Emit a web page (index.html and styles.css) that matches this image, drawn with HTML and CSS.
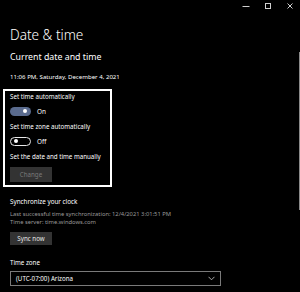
FILE: index.html
```html
<!DOCTYPE html>
<html>
<head>
<meta charset="utf-8">
<link rel="stylesheet" href="styles.css">
</head>
<body>
<div class="window">
  <div class="titlebar">
    <span class="ctl ctl-min"><svg width="8" height="8" viewBox="0 0 8 8"><path d="M0.5 4.5h7" stroke="#cfcfcf" stroke-width="1"/></svg></span>
    <span class="ctl ctl-max"><svg width="8" height="8" viewBox="0 0 8 8"><rect x="1.5" y="1.5" width="5" height="5" fill="none" stroke="#cfcfcf" stroke-width="1"/></svg></span>
    <span class="ctl ctl-close"><svg width="8" height="8" viewBox="0 0 8 8"><path d="M1.5 1.5l5 5M6.5 1.5l-5 5" stroke="#cfcfcf" stroke-width="1"/></svg></span>
  </div>
  <div class="scrollbar"></div>
  <div class="content">
    <h1 class="title">Date &amp; time</h1>
    <h2 class="subtitle">Current date and time</h2>
    <div class="now">11:06 PM, Saturday, December 4, 2021</div>

    <div class="highlight">
      <div class="label">Set time automatically</div>
      <div class="toggle-row">
        <span class="toggle toggle-on"><span class="thumb"></span></span>
        <span class="toggle-text">On</span>
      </div>
      <div class="label">Set time zone automatically</div>
      <div class="toggle-row">
        <span class="toggle toggle-off"><span class="thumb"></span></span>
        <span class="toggle-text">Off</span>
      </div>
      <div class="label label-manual">Set the date and time manually</div>
      <div class="btn btn-disabled">Change</div>
    </div>

    <h3 class="section">Synchronize your clock</h3>
    <div class="info">Last successful time synchronization: 12/4/2021 3:01:51 PM</div>
    <div class="info">Time server: time.windows.com</div>
    <div class="btn btn-sync">Sync now</div>

    <div class="label tz-label">Time zone</div>
    <div class="select">
      <span>(UTC-07:00) Arizona</span>
      <svg class="chev" width="7" height="5" viewBox="0 0 7 5"><path d="M0.5 0.8l3 3 3-3" fill="none" stroke="#bbbbbb" stroke-width="0.9"/></svg>
    </div>
  </div>
</div>
</body>
</html>
```

FILE: styles.css
```css
html, body {
  margin: 0;
  padding: 0;
  background: #000;
}
body {
  width: 300px;
  height: 292px;
  overflow: hidden;
  font-family: "Noto Sans", "Open Sans", sans-serif;
  color: #fff;
}
.window {
  position: relative;
  width: 300px;
  height: 292px;
}
.titlebar {
  display: flex;
  justify-content: flex-end;
  height: 12px;
  padding-right: 6px;
  gap: 14px;
  align-items: center;
}
.ctl {
  display: flex;
  width: 8px;
  height: 8px;
}
.scrollbar {
  position: absolute;
  right: 0;
  top: 52px;
  width: 1.5px;
  height: 158px;
  background: #8a8a8a;
}
.content {
  padding-left: 10px;
}
.title {
  margin: 0;
  font-size: 13.6px;
  font-weight: 300;
  line-height: 20px;
  margin-top: 13px;
}
.subtitle {
  margin: 0;
  font-size: 8.8px;
  font-weight: 400;
  line-height: 14px;
  margin-top: 5px;
}
.now {
  font-size: 6.1px;
  line-height: 10px;
  margin-top: 8px;
}
.highlight {
  margin-left: -7px;
  margin-top: 7px;
  width: 100px;
  height: 93px;
  border: 2px solid #fff;
  padding: 1px 0 0 5px;
}
.label {
  font-size: 6.2px;
  line-height: 10px;
}
.label-manual {
  margin-top: 1px;
}
.toggle-row {
  display: flex;
  align-items: center;
  height: 10px;
  margin: 4px 0 6px;
}
.toggle {
  position: relative;
  box-sizing: border-box;
  width: 21px;
  height: 9px;
  border-radius: 5px;
}
.toggle-on {
  background: #5a6b8e;
}
.toggle-off {
  border: 1.2px solid #e8e8e8;
}
.thumb {
  position: absolute;
  top: 50%;
  width: 4px;
  height: 4px;
  margin-top: -2px;
  border-radius: 50%;
  background: #fff;
}
.toggle-on .thumb {
  right: 4px;
}
.toggle-off .thumb {
  left: 3px;
}
.toggle-text {
  margin-left: 6px;
  font-size: 6.4px;
}
.btn {
  width: 42px;
  height: 14px;
  line-height: 14px;
  text-align: center;
  font-size: 6.2px;
  background: #333;
}
.btn-disabled {
  margin-top: 5px;
  height: 15px;
  line-height: 15px;
  color: #7a7a7a;
}
.section {
  margin: 0;
  margin-top: 10px;
  font-size: 6.3px;
  font-weight: 400;
  line-height: 10px;
}
.info {
  font-size: 5.8px;
  line-height: 8px;
  color: #9a9a9a;
}
.section + .info {
  margin-top: 3px;
}
.btn-sync {
  margin-top: 6px;
  height: 13px;
  line-height: 13px;
  color: #e8e8e8;
}
.tz-label {
  margin-top: 13px;
}
.select {
  margin-top: 3px;
  box-sizing: border-box;
  width: 211px;
  height: 15px;
  border: 1.5px solid #7a7a7a;
  display: flex;
  align-items: center;
  justify-content: space-between;
  padding: 0 5px 0 5px;
  font-size: 6.2px;
}
.chev {
  display: block;
}
```
